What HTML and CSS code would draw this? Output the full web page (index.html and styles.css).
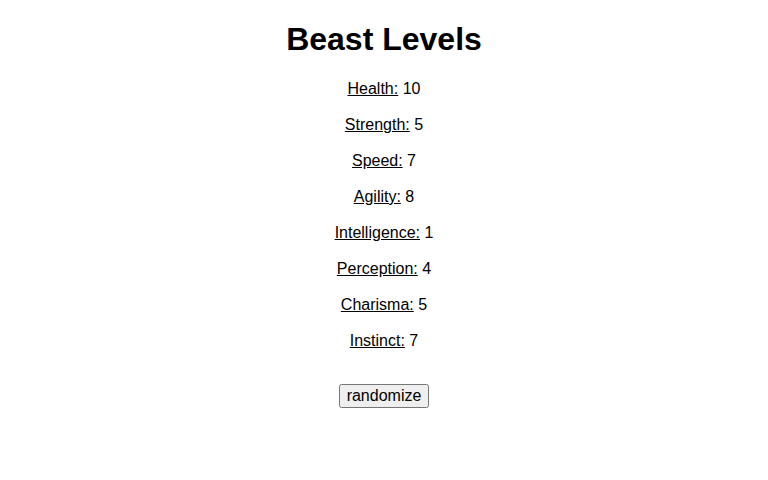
FILE: index.html
```html
<!DOCTYPE html>
<html lang="en">
<head>
    <meta charset="UTF-8">
    <meta name="viewport" content="width=device-width, initial-scale=1.0">
    <title>Beast Levels</title>
    <link rel="stylesheet" href="styles.css">
</head>
<body>

<div class="container">
  <h1 class="title">Beast Levels</h1>

  <div class="stats">
    <p class="stat"><span class="stat-label">Health:</span> 10</p>
    <p class="stat"><span class="stat-label">Strength:</span> 5</p>
    <p class="stat"><span class="stat-label">Speed:</span> 7</p>
    <p class="stat"><span class="stat-label">Agility:</span> 8</p>
    <p class="stat"><span class="stat-label">Intelligence:</span> 1</p>
    <p class="stat"><span class="stat-label">Perception:</span> 4</p>
    <p class="stat"><span class="stat-label">Charisma:</span> 5</p>
    <p class="stat"><span class="stat-label">Instinct:</span> 7</p>
  </div>

  <button class="randomize-btn">randomize</button>
</div>

</body>
</html>
```

FILE: styles.css
```css
/*CSS RESETS*/

body {
    margin: 0;
    font-family: "Liberation Sans", Arial, sans-serif;
    color: #000;
    background-color: #fff;
}

p {
    margin: 0;
}

/*CSS START*/

.container{
    display: flex;
    flex-direction: column;
    align-items: center;
    padding-top: 21px;
}

.title{
    margin: 0;
    font-size: 32px;
    font-weight: bold;
    line-height: 37px;
}

.stats{
    display: flex;
    flex-direction: column;
    align-items: center;
    gap: 16px;
    margin-top: 21px;
}

.stat{
    font-size: 16px;
    line-height: 20px;
}

.stat-label{
    text-decoration: underline;
}

.randomize-btn{
    margin-top: 33px;
    font-family: "Liberation Sans", Arial, sans-serif;
    font-size: 16px;
}
```
